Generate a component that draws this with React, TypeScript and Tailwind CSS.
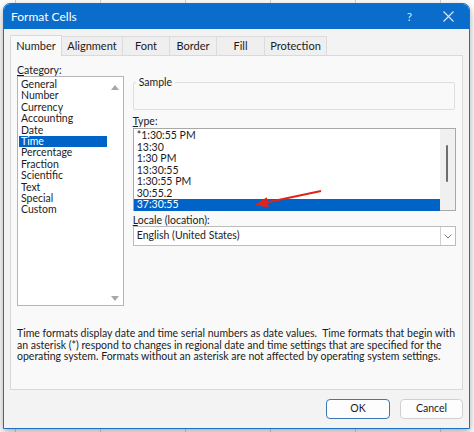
import React from "react";

const font = "font-['Lato','Segoe_UI',sans-serif]";

function Tab({ label, w, active }: { label: string; w: string; active?: boolean }) {
  return (
    <div
      className={
        active
          ? `${w} h-[21px] -mb-[1px] mt-[-2px] flex items-center justify-center bg-[#f9f9f9] border border-b-0 border-[#d9d9d9] relative z-10 text-[11px] text-[#1b1b1b]`
          : `${w} h-[19px] flex items-center justify-center bg-[#efefef] border-r border-t border-[#dcdcdc] text-[11px] text-[#1b1b1b]`
      }
    >
      {label}
    </div>
  );
}

export default function App() {
  const categories = [
    "General",
    "Number",
    "Currency",
    "Accounting",
    "Date",
    "Time",
    "Percentage",
    "Fraction",
    "Scientific",
    "Text",
    "Special",
    "Custom",
  ];
  const types = ["*1:30:55 PM", "13:30", "1:30 PM", "13:30:55", "1:30:55 PM", "30:55.2", "37:30:55"];

  return (
    <div
      className={`${font} w-[474px] h-[432px] overflow-hidden bg-white bg-[repeating-linear-gradient(90deg,transparent_0_15px,#d2d2d2_15px_16px,transparent_16px_85px)] pt-[3px] pl-[3px]`}
    >
      <div className="w-[467px] h-[426px] flex flex-col bg-[#f3f3f3] border border-[#1a6fc4] rounded-t-[7px] overflow-hidden shadow-[0_3px_8px_rgba(0,0,0,0.35)]">
        {/* title bar */}
        <div className="h-[25px] bg-[#0a6ccb] flex items-center pl-[7px] pr-[14px] text-white">
          <span className="text-[12px] leading-none">Format Cells</span>
          <span className="ml-auto text-[12px] leading-none text-[#dbe9f8] mr-[31px]">?</span>
          <svg width="11" height="11" viewBox="0 0 11 11" className="mr-[1px]">
            <path d="M0.5 0.5 L10.5 10.5 M10.5 0.5 L0.5 10.5" stroke="#dbe9f8" strokeWidth="1.1" />
          </svg>
        </div>

        <div className="flex flex-col px-[6px] pt-[7px]">
          {/* tabs */}
          <div className="flex h-[19px] items-end">
            <Tab label="Number" w="w-[52px]" active />
            <Tab label="Alignment" w="w-[61px]" />
            <Tab label="Font" w="w-[47px]" />
            <Tab label="Border" w="w-[47px]" />
            <Tab label="Fill" w="w-[48px]" />
            <Tab label="Protection" w="w-[62px]" />
          </div>

          {/* panel */}
          <div className="h-[335px] bg-[#f9f9f9] border border-[#d9d9d9] flex flex-col px-[6px] text-[10.5px] text-[#1b1b1b]">
            <div className="flex gap-[9px]">
              {/* left column */}
              <div className="w-[107px] flex flex-col pt-[8px]">
                <div className="h-[12px] leading-[12px]">
                  <span className="underline underline-offset-[1px]">C</span>ategory:
                </div>
                <div className="mt-[0px] h-[230px] bg-white border border-[#b5b5b5] flex">
                  <div className="flex-1 flex flex-col pt-[2px] pl-[1px]">
                    {categories.map((c) => (
                      <div
                        key={c}
                        className={
                          c === "Time"
                            ? "h-[11.4px] leading-[11.4px] pl-[2px] bg-[#0063c8] text-white"
                            : "h-[11.4px] leading-[11.4px] pl-[2px]"
                        }
                      >
                        {c}
                      </div>
                    ))}
                  </div>
                  <div className="w-[16px] flex flex-col items-center justify-between pt-[8px] pb-[4px]">
                    <svg width="8" height="5" viewBox="0 0 8 5">
                      <path d="M0 5 L4 0 L8 5 Z" fill="#a8a8a8" />
                    </svg>
                    <svg width="8" height="5" viewBox="0 0 8 5">
                      <path d="M0 0 L8 0 L4 5 Z" fill="#a8a8a8" />
                    </svg>
                  </div>
                </div>
              </div>

              {/* right column */}
              <div className="w-[324px] flex flex-col pt-[20px]">
                <fieldset className="h-[34px] border border-[#dedede] rounded-[2px] w-[322px]">
                  <legend className="ml-[2px] px-[3px] leading-[12px] text-[10.5px]">Sample</legend>
                </fieldset>
                <div className="mt-[5px] h-[12px] leading-[12px]">
                  <span className="underline underline-offset-[1px]">T</span>ype:
                </div>
                <div className="relative mt-[1px] h-[83px] w-[323px] bg-white border border-[#a8a8a8] flex">
                  <div className="flex-1 flex flex-col pt-[1px]">
                    {types.map((t) => (
                      <div
                        key={t}
                        className={
                          t === "37:30:55"
                            ? "h-[11.5px] leading-[11.5px] pl-[3px] bg-[#0063c8] text-white"
                            : "h-[11.5px] leading-[11.5px] pl-[3px]"
                        }
                      >
                        {t}
                      </div>
                    ))}
                  </div>
                  <div className="w-[15px] bg-[#f0f0f0] flex justify-center pt-[16px]">
                    <div className="w-[2px] h-[37px] bg-[#6e6e6e] rounded-full" />
                  </div>
                  <svg
                    className="absolute left-0 top-0 pointer-events-none overflow-visible"
                    width="323"
                    height="83"
                    viewBox="0 0 323 83"
                  >
                    <line x1="187" y1="62" x2="130" y2="74" stroke="#e0231c" strokeWidth="1.8" />
                    <path d="M121 76 L134.7 78.6 L132.7 68.2 Z" fill="#e0231c" />
                  </svg>
                </div>
                <div className="mt-[3px] h-[12px] leading-[12px]">
                  <span className="underline underline-offset-[1px]">L</span>ocale (location):
                </div>
                <div className="mt-[0px] h-[20px] w-[323px] bg-white border border-[#bcbcbc] flex items-center">
                  <span className="pl-[3px] flex-1">English (United States)</span>
                  <div className="w-[15px] h-full border-l border-[#d0d0d0] flex items-center justify-center">
                    <svg width="8" height="5" viewBox="0 0 8 5">
                      <path d="M0.5 0.5 L4 4 L7.5 0.5" stroke="#7a7a7a" strokeWidth="1" fill="none" />
                    </svg>
                  </div>
                </div>
              </div>
            </div>

            <div className="mt-[22px] flex flex-col leading-[11.5px] whitespace-pre">
              <span>Time formats display date and time serial numbers as date values.  Time formats that begin with</span>
              <span>an asterisk (*) respond to changes in regional date and time settings that are specified for the</span>
              <span>operating system. Formats without an asterisk are not affected by operating system settings.</span>
            </div>
          </div>

          {/* buttons */}
          <div className="flex justify-end gap-[10px] mt-[9px]">
            <button className="w-[64px] h-[20px] bg-[#fdfdfd] border-[1.5px] border-[#3a77b4] rounded-[4px] text-[10.5px] text-[#1b1b1b] flex items-center justify-center">
              OK
            </button>
            <button className="w-[63px] h-[20px] bg-[#fdfdfd] border border-[#d0d0d0] rounded-[4px] text-[10.5px] text-[#1b1b1b] flex items-center justify-center">
              Cancel
            </button>
          </div>
        </div>
      </div>
    </div>
  );
}
